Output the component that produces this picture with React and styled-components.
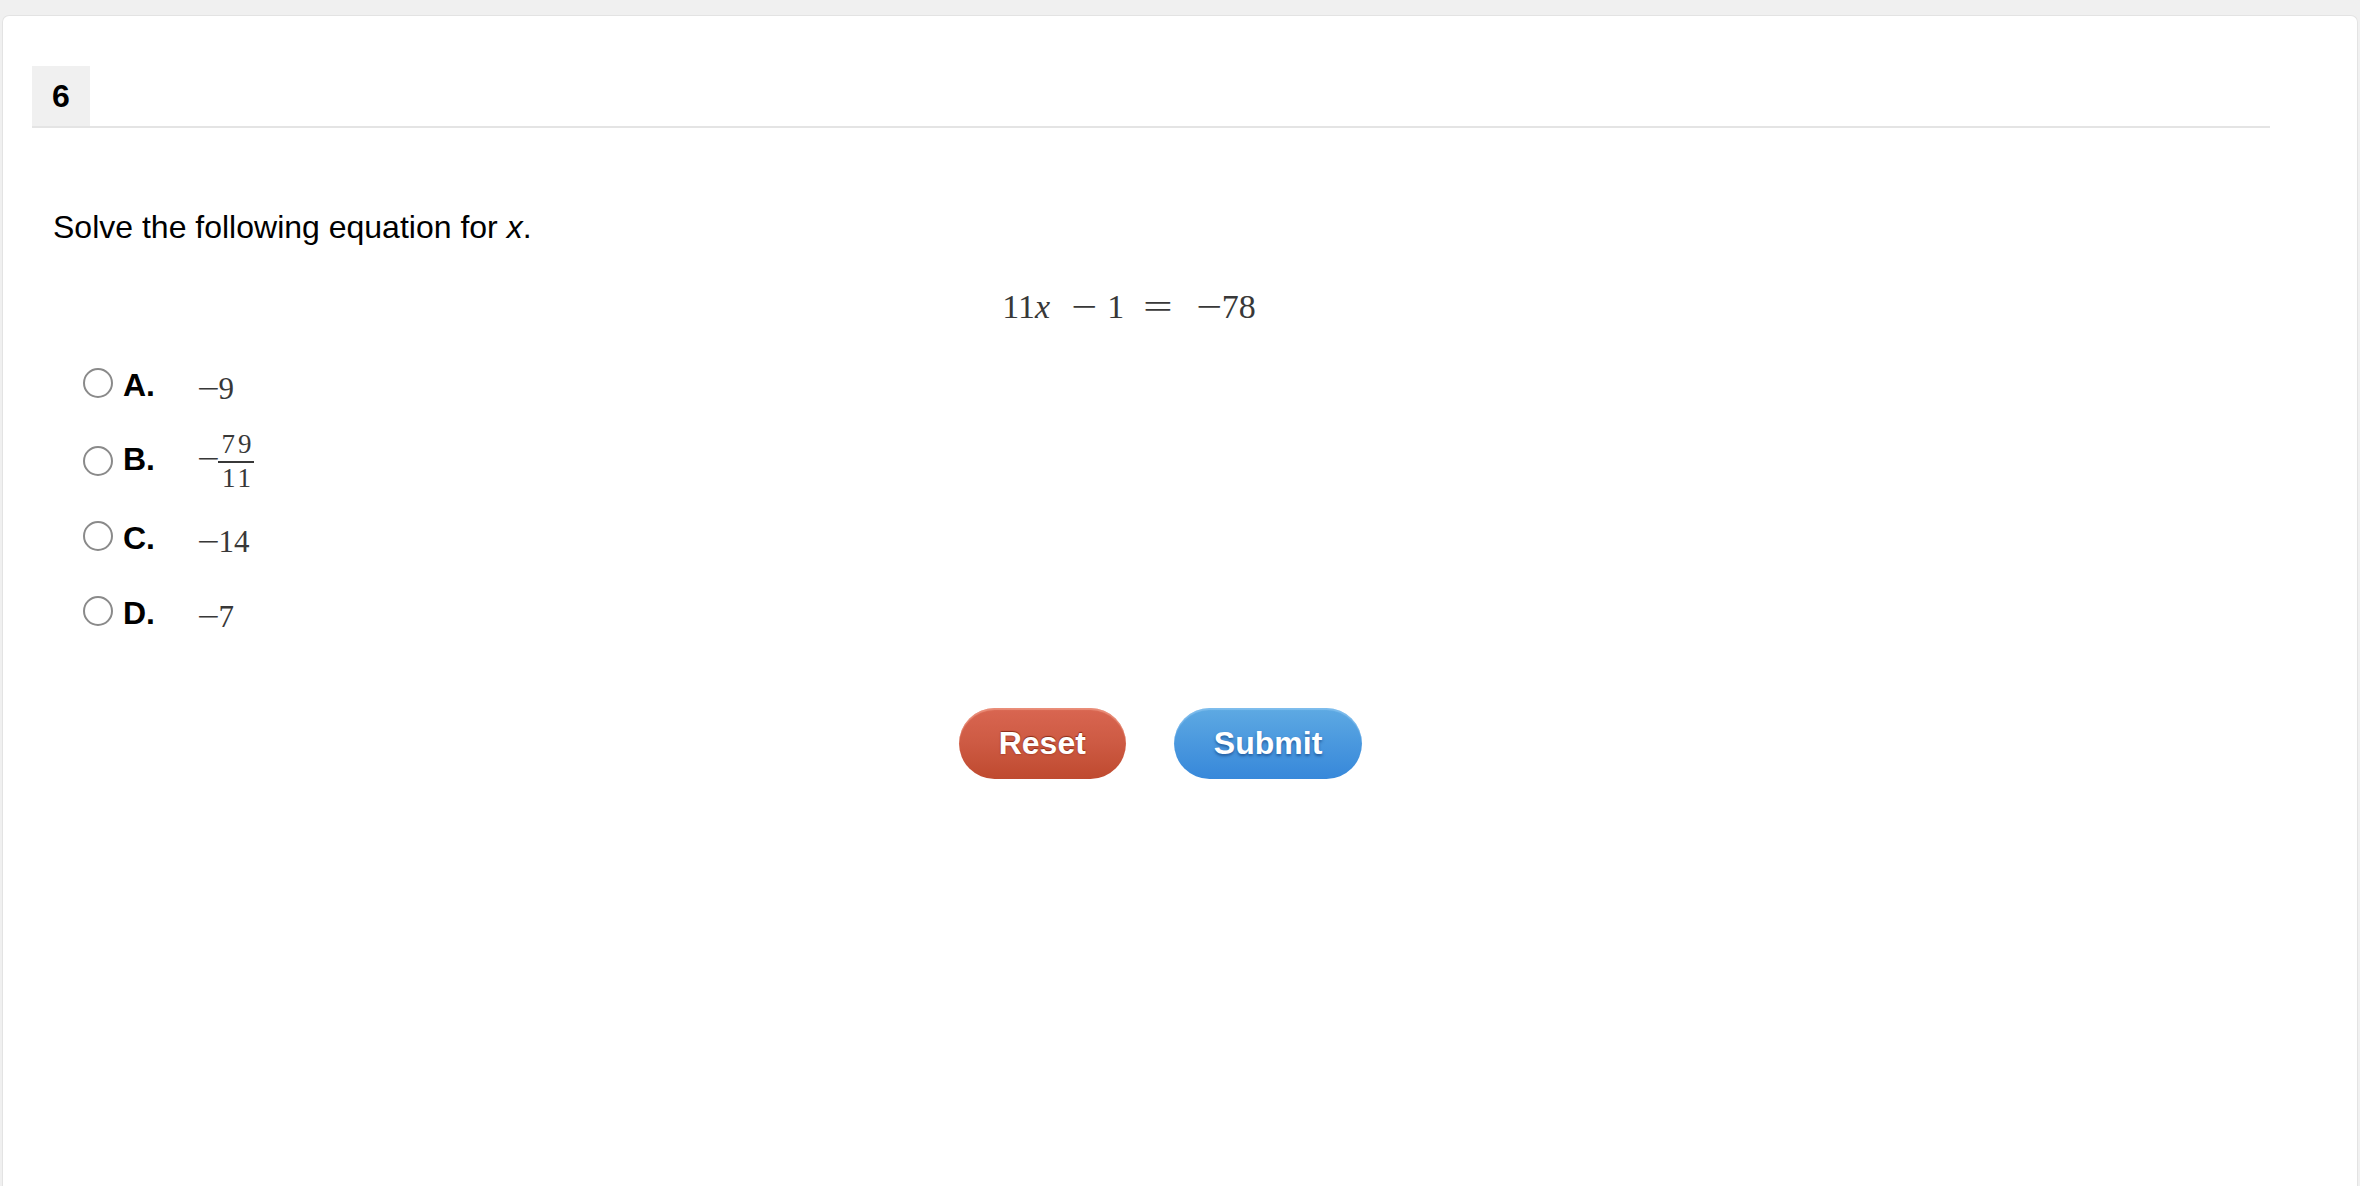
import React from "react";
import styled, { createGlobalStyle, css } from "styled-components";

const GlobalStyle = createGlobalStyle`
  html, body {
    margin: 0;
    padding: 0;
    background: #f0f0f0;
  }
  body {
    font-family: "Liberation Sans", Arial, sans-serif;
    color: #000;
  }
`;

const Page = styled.div`
  min-height: 100vh;
  box-sizing: border-box;
  padding: 15px 2px 0;
  display: flex;
  flex-direction: column;
`;

const Card = styled.main`
  flex: 1;
  background: #fff;
  border: 1px solid #e3e3e3;
  border-bottom: none;
  border-radius: 7px 7px 0 0;
  padding: 50px 87px 0 29px;
`;

const Header = styled.div`
  display: flex;
  border-bottom: 2px solid #e4e4e4;
`;

const QuestionNumber = styled.div`
  width: 58px;
  height: 60px;
  background: #f0f0f0;
  display: flex;
  align-items: center;
  justify-content: center;
  font-weight: 700;
  font-size: 32px;
  color: #000;
`;

const Question = styled.section`
  padding-left: 21px;
`;

const Prompt = styled.p`
  margin: 81px 0 0;
  font-size: 32px;
  line-height: 36px;
  color: #000;
`;

const mathFont = css`
  font-family: "Liberation Serif", "Times New Roman", serif;
  color: #383838;
`;

const Equation = styled.div`
  ${mathFont};
  margin-top: 41.5px;
  padding-right: 65px;
  display: flex;
  justify-content: center;
  font-size: 34px;
  line-height: 40px;
`;

const Num = styled.span``;

const Var = styled.span`
  font-style: italic;
`;

const Op = styled.span`
  display: inline-block;
  transform: scaleX(${(p) => p.$scale || 1.3});
  transform-origin: 0 50%;
  margin-left: ${(p) => p.$ml || 0}px;
  margin-right: ${(p) => p.$mr || 0}px;
  padding-bottom: ${(p) => p.$lift || 0}px;
`;

const Options = styled.div`
  margin-top: 19px;
  padding-left: 30px;
  display: flex;
  flex-direction: column;
`;

const Option = styled.label`
  display: flex;
  align-items: center;
  box-sizing: border-box;
  height: ${(p) => (p.$tall ? 78 : 75)}px;
  padding-top: ${(p) => (p.$tall ? 2 : 0)}px;
  cursor: pointer;
`;

const Radio = styled.input.attrs({ type: "radio" })`
  appearance: none;
  -webkit-appearance: none;
  flex: none;
  margin: 0;
  width: 30px;
  height: 30px;
  box-sizing: border-box;
  border: 2.5px solid #8a8a8a;
  border-radius: 50%;
  background: #fff;
  cursor: pointer;
`;

const Letter = styled.span`
  margin-left: 10px;
  width: 74px;
  font-weight: 700;
  font-size: 32px;
  line-height: 36px;
  padding-top: ${(p) => (p.$tall ? 0 : 4)}px;
  padding-bottom: ${(p) => (p.$tall ? 4 : 0)}px;
`;

const AnswerMath = styled.span`
  ${mathFont};
  display: flex;
  align-items: center;
  font-size: 31px;
  line-height: 36px;
  padding-top: ${(p) => (p.$tall ? 0 : 11)}px;
`;

const Fraction = styled.span`
  display: inline-flex;
  flex-direction: column;
  align-items: center;
`;

const FracPart = styled.span`
  font-size: 27px;
  line-height: 24px;
  letter-spacing: 3px;
  padding-left: 3px;
`;

const FracBar = styled.span`
  align-self: stretch;
  height: 2px;
  margin: 5px 0 3px;
  background: #383838;
`;

const ButtonRow = styled.div`
  margin-top: 59px;
  display: flex;
  justify-content: center;
  gap: 48px;
  padding-right: 2px;
`;

const tones = {
  red: css`
    background: linear-gradient(to bottom, #d96651 0%, #cd5a43 50%, #bf4a2f 100%);
    box-shadow: inset 0 2px 1px rgba(255, 190, 170, 0.45);
    text-shadow: 0 -1px 1px rgba(110, 25, 5, 0.7), 0 1px 2px rgba(90, 20, 0, 0.25);
  `,
  blue: css`
    background: linear-gradient(to bottom, #5eaae3 0%, #4a98de 50%, #3788da 100%);
    box-shadow: inset 0 2px 1px rgba(190, 225, 255, 0.35);
    text-shadow: 0 2px 3px rgba(10, 50, 110, 0.55);
  `,
};

const Pill = styled.button`
  height: 71px;
  padding: 0 40px;
  border: none;
  border-radius: 36px;
  font-family: "Liberation Sans", Arial, sans-serif;
  font-weight: 700;
  font-size: 32px;
  color: #fff;
  cursor: pointer;
  ${(p) => tones[p.$tone]};
`;

const answers = [
  { letter: "A.", value: "9" },
  { letter: "B.", num: "79", den: "11" },
  { letter: "C.", value: "14" },
  { letter: "D.", value: "7" },
];

export default function App() {
  return (
    <>
      <GlobalStyle />
      <Page>
        <Card>
          <Header>
            <QuestionNumber>6</QuestionNumber>
          </Header>
          <Question>
            <Prompt>
              Solve the following equation for <i>x</i>.
            </Prompt>
            <Equation>
              <Num>11</Num>
              <Var>x</Var>
              <Op $scale={1.35} $ml={21} $mr={17}>−</Op>
              <Num>1</Num>
              <Op $scale={1.55} $ml={19} $mr={33}>=</Op>
              <Op $scale={1.35} $mr={7}>−</Op>
              <Num>78</Num>
            </Equation>
            <Options>
              {answers.map((a) => {
                const tall = Boolean(a.num);
                return (
                  <Option key={a.letter} $tall={tall}>
                    <Radio name="answer" />
                    <Letter $tall={tall}>{a.letter}</Letter>
                    <AnswerMath $tall={tall}>
                      <Op $mr={4} $lift={tall ? 3 : 0}>−</Op>
                      {tall ? (
                        <Fraction>
                          <FracPart>{a.num}</FracPart>
                          <FracBar />
                          <FracPart>{a.den}</FracPart>
                        </Fraction>
                      ) : (
                        <Num>{a.value}</Num>
                      )}
                    </AnswerMath>
                  </Option>
                );
              })}
            </Options>
            <ButtonRow>
              <Pill $tone="red">Reset</Pill>
              <Pill $tone="blue">Submit</Pill>
            </ButtonRow>
          </Question>
        </Card>
      </Page>
    </>
  );
}
